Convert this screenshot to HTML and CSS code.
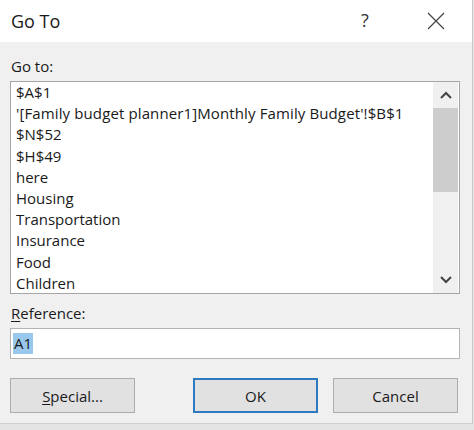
FILE: index.html
```html
<!DOCTYPE html>
<html>
<head>
<meta charset="utf-8">
<link rel="stylesheet" href="styles.css">
</head>
<body>
<div class="screen">
  <div class="dialog">
    <div class="titlebar">
      <span class="title">Go To</span>
      <span class="help">?</span>
      <span class="close">
        <svg width="18" height="18" viewBox="0 0 18 18"><path d="M1 1 L17 17 M17 1 L1 17" stroke="#444" stroke-width="1.2" fill="none"/></svg>
      </span>
    </div>
    <div class="body">
      <div class="label goto">Go to:</div>
      <div class="listbox">
        <ul class="items">
          <li>$A$1</li>
          <li class="long">'[Family budget planner1]Monthly Family Budget'!$B$1</li>
          <li>$N$52</li>
          <li>$H$49</li>
          <li>here</li>
          <li>Housing</li>
          <li>Transportation</li>
          <li>Insurance</li>
          <li>Food</li>
          <li>Children</li>
        </ul>
        <div class="scrollbar">
          <div class="arrow">
            <svg width="14" height="10" viewBox="0 0 14 10"><path d="M2 8 L7 3 L12 8" stroke="#444" stroke-width="2" fill="none"/></svg>
          </div>
          <div class="track"><div class="thumb"></div></div>
          <div class="arrow">
            <svg width="14" height="10" viewBox="0 0 14 10"><path d="M2 2 L7 7 L12 2" stroke="#444" stroke-width="2" fill="none"/></svg>
          </div>
        </div>
      </div>
      <div class="label ref"><u>R</u>eference:</div>
      <div class="input"><span class="sel">A1</span></div>
      <div class="buttons">
        <div class="btn"><u>S</u>pecial...</div>
        <div class="spacer"></div>
        <div class="btn ok">OK</div>
        <div class="btn">Cancel</div>
      </div>
    </div>
  </div>
</div>
</body>
</html>
```

FILE: styles.css
```css
html, body {
  margin: 0;
  padding: 0;
}
body {
  width: 474px;
  height: 430px;
  overflow: hidden;
  background: #dcdcdc;
  font-family: "Open Sans", "Noto Sans", sans-serif;
  color: #1a1a1a;
}
.screen {
  width: 474px;
  height: 430px;
  background: #e4e4e4;
}
.dialog {
  width: 472px;
  height: 423px;
  background: #f0f0f0;
  border-right: 1px solid #c8c8c8;
  border-bottom: 1px solid #cfcfcf;
  display: flex;
  flex-direction: column;
}
.titlebar {
  height: 42px;
  background: #fff;
  display: flex;
  align-items: center;
  flex-shrink: 0;
}
.title {
  font-size: 18px;
  margin-left: 11px;
  flex: 1;
  margin-top: -1px;
}
.help {
  font-size: 18px;
  color: #333;
  width: 20px;
  margin-right: 46px;
  margin-top: -2px;
}
.close {
  width: 18px;
  height: 18px;
  margin-right: 27px;
  display: flex;
}
.body {
  padding: 0 12px 0 10px;
  display: flex;
  flex-direction: column;
}
.label {
  font-size: 15px;
  line-height: 20px;
  padding-left: 1px;
}
.label u {
  text-decoration-thickness: 1px;
  text-underline-offset: 2px;
}
.goto {
  margin-top: 14px;
  margin-bottom: 5px;
}
.listbox {
  height: 211px;
  border: 1px solid #a6a6a6;
  background: #fff;
  display: flex;
}
.items {
  list-style: none;
  margin: 0;
  padding: 0 0 0 5px;
  flex: 1;
  font-size: 15px;
  line-height: 21.2px;
  overflow: hidden;
}
.items li {
  white-space: nowrap;
}
.items .long {
  letter-spacing: 0.12px;
}
.scrollbar {
  width: 25px;
  margin-right: 1px;
  background: #f0f0f0;
  display: flex;
  flex-direction: column;
}
.arrow {
  height: 26px;
  display: flex;
  align-items: center;
  justify-content: center;
}
.track {
  flex: 1;
}
.thumb {
  height: 84px;
  background: #cdcdcd;
}
.ref {
  margin-top: 9px;
}
.input {
  margin-top: 5px;
  height: 29px;
  border: 1px solid #b4b4b4;
  background: #fff;
  display: flex;
  align-items: center;
  padding-left: 2px;
}
.sel {
  background: #99c8ec;
  font-size: 15px;
  line-height: 21px;
  padding: 0 1px;
}
.buttons {
  margin-top: 19px;
  display: flex;
  gap: 15px;
}
.spacer {
  width: 43px;
}
.btn {
  width: 123px;
  height: 33px;
  border: 1px solid #adadad;
  background: #e1e1e1;
  display: flex;
  align-items: center;
  justify-content: center;
  font-size: 15px;
}
.btn u {
  text-decoration-thickness: 1px;
  text-underline-offset: 2px;
}
.spacer + .btn {
  margin-left: -15px;
}
.ok {
  border: 2px solid #2f79c2;
  width: 121px;
  height: 31px;
}
```
